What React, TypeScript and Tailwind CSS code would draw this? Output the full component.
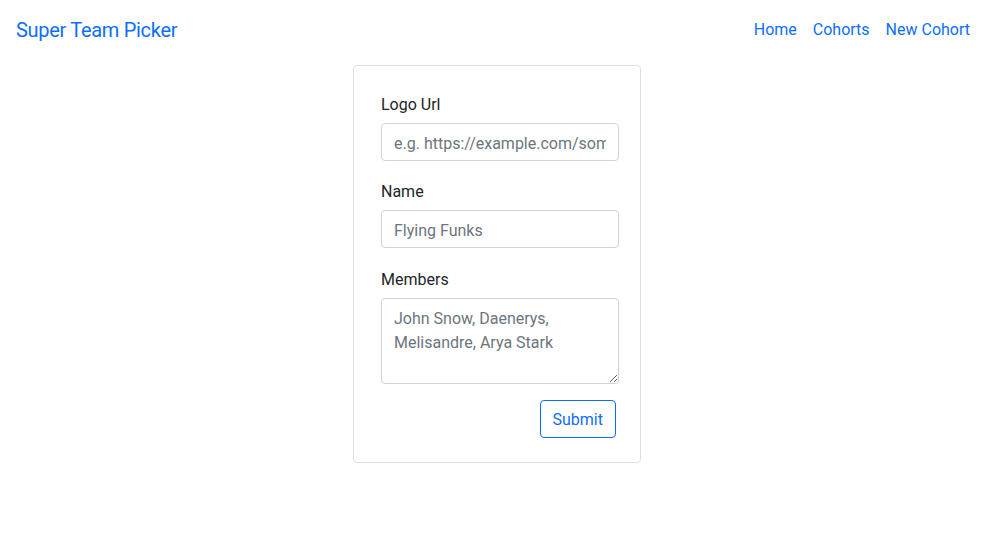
export default function App() {
  return (
    <div className="min-h-screen bg-white font-['Roboto',sans-serif] text-[#212529]">
      {/* Navbar */}
      <nav className="flex items-center justify-between px-4 py-2">
        <a href="#" className="pb-[3px] pt-[7px] text-[20px] leading-[30px] tracking-[-0.3px] text-[#0d6efd]">
          Super Team Picker
        </a>
        <div className="flex">
          <a href="#" className="px-2 pb-[6px] pt-[10px] text-base leading-6 text-[#0d6efd]">Home</a>
          <a href="#" className="px-2 pb-[6px] pt-[10px] text-base leading-6 text-[#0d6efd]">Cohorts</a>
          <a href="#" className="px-2 pb-[6px] pt-[10px] text-base leading-6 text-[#0d6efd]">New Cohort</a>
        </div>
      </nav>

      {/* Form card */}
      <div className="mt-[9px] flex justify-center">
        <div className="w-[288px] rounded border border-[rgba(0,0,0,0.125)] pb-[24px] pl-[27px] pr-[21px] pt-[25px]">
          <form>
            <div className="mb-[17px]">
              <label className="mb-[6px] block pt-[2px] text-base leading-6">Logo Url</label>
              <input
                type="text"
                placeholder="e.g. https://example.com/some-image.png"
                className="block h-[38px] w-full rounded border border-[#ced4da] px-3 pt-[2px] text-base leading-6 placeholder:text-[#6c757d] focus:outline-none"
              />
            </div>
            <div className="mb-[18px]">
              <label className="mb-[6px] block pt-[2px] text-base leading-6">Name</label>
              <input
                type="text"
                placeholder="Flying Funks"
                className="block h-[38px] w-full rounded border border-[#ced4da] px-3 pt-[2px] text-base leading-6 placeholder:text-[#6c757d] focus:outline-none"
              />
            </div>
            <div className="mb-4">
              <label className="mb-[6px] block pt-[2px] text-base leading-6">Members</label>
              <textarea
                rows={3}
                placeholder="John Snow, Daenerys, Melisandre, Arya Stark"
                className="block h-[86px] w-full resize-y rounded border border-[#ced4da] px-3 pb-1 pt-2 text-base leading-6 placeholder:text-[#6c757d] focus:outline-none"
              />
            </div>
            <div className="flex justify-end">
              <button
                type="submit"
                className="mr-[3px] h-[38px] rounded border border-[#0d6efd] px-3 pt-[2px] text-base leading-6 text-[#0d6efd]"
              >
                Submit
              </button>
            </div>
          </form>
        </div>
      </div>
    </div>
  );
}
